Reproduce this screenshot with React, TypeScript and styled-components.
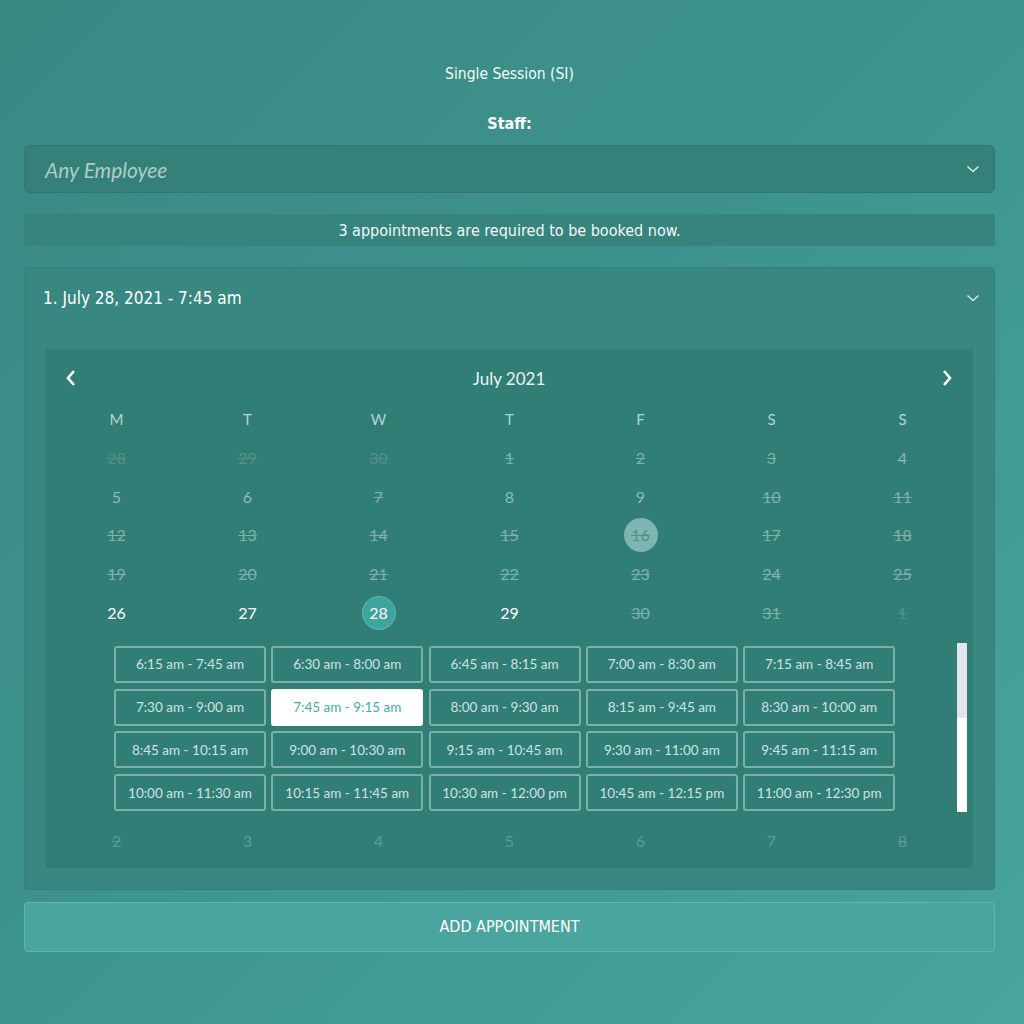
import styled, { createGlobalStyle, css } from 'styled-components';

const GlobalStyle = createGlobalStyle`
  html, body {
    margin: 0;
    padding: 0;
  }
  body {
    min-height: 1024px;
    background: linear-gradient(135deg, #398983 0%, #3d938b 45%, #47a59e 100%);
    color: #ffffff;
    font-family: Lato, 'Noto Sans', sans-serif;
  }
`;

const narrow = `'Liberation Sans Narrow', 'DejaVu Sans Condensed', 'Roboto Condensed', sans-serif`;

const Page = styled.div`
  width: 971px;
  margin-left: 24px;
  padding-top: 63px;
  display: flex;
  flex-direction: column;
`;

const ServiceName = styled.div`
  font-family: ${narrow};
  font-size: 15.5px;
  text-align: center;
  line-height: 22px;
  color: #f4f9f8;
`;

const Label = styled.div`
  font-family: ${narrow};
  font-size: 16px;
  font-weight: 700;
  text-align: center;
  line-height: 24px;
  margin-top: 27px;
  margin-bottom: 9px;
`;

const Select = styled.div`
  height: 48px;
  box-sizing: border-box;
  display: flex;
  align-items: center;
  justify-content: space-between;
  padding: 0 14px 0 20px;
  background: #35817a;
  border: 1px solid #317871;
  border-radius: 6px;
`;

const Placeholder = styled.span`
  font-family: Lato, sans-serif;
  font-style: italic;
  font-size: 21px;
  color: #aecdc9;
`;

const Notice = styled.div`
  margin-top: 21px;
  height: 32px;
  display: flex;
  align-items: center;
  justify-content: center;
  background: #37847d;
  border-radius: 3px;
  font-family: ${narrow};
  font-size: 16px;
  color: #f4f9f8;
`;

const Panel = styled.div`
  margin-top: 21px;
  border: 1px solid #338079;
  border-radius: 4px;
  background: #388881;
  padding: 0 21px 21px;
`;

const PanelHeader = styled.div`
  height: 60px;
  display: flex;
  align-items: center;
  justify-content: space-between;
  margin: 0 -7px 0 -3px;
  font-family: ${narrow};
  font-size: 17px;
  color: #ffffff;
`;

const Calendar = styled.div`
  margin-top: 21px;
  background: #317e77;
  padding: 0 5px 8px;
`;

const Nav = styled.div`
  height: 58px;
  display: flex;
  align-items: center;
  justify-content: space-between;
  padding: 0 14px 0 13px;
`;

const Month = styled.div`
  font-family: Lato, sans-serif;
  font-size: 17px;
  color: #e9f3f2;
`;

const NavButton = styled.button`
  background: none;
  border: 0;
  padding: 0;
  width: 14px;
  height: 20px;
  display: flex;
  align-items: center;
  justify-content: center;
  cursor: pointer;
`;

const WeekRow = styled.div`
  display: grid;
  grid-template-columns: repeat(7, 1fr);
  height: 24px;
  align-items: center;
  margin-bottom: 7px;
`;

const WeekDay = styled.div`
  text-align: center;
  font-size: 15px;
  color: #b2d5d0;
`;

const DayRow = styled.div`
  display: grid;
  grid-template-columns: repeat(7, 1fr);
  height: 38.8px;
  align-items: center;
`;

type DayKind = 'active' | 'plain' | 'struck' | 'other';

const Day = styled.div<{ $kind: DayKind; $selected?: boolean; $today?: boolean }>`
  justify-self: center;
  width: 34px;
  height: 34px;
  box-sizing: border-box;
  border-radius: 50%;
  display: flex;
  align-items: center;
  justify-content: center;
  font-size: 16px;
  ${(p) =>
    p.$kind === 'active' &&
    css`
      color: #ffffff;
    `}
  ${(p) =>
    p.$kind === 'plain' &&
    css`
      color: #8bbab5;
    `}
  ${(p) =>
    p.$kind === 'struck' &&
    css`
      color: #7fb1ac;
      text-decoration: line-through;
    `}
  ${(p) =>
    p.$kind === 'other' &&
    css`
      color: #568f8a;
      text-decoration: line-through;
    `}
  ${(p) =>
    p.$today &&
    css`
      background: #7db6b1;
      color: #4e928c;
    `}
  ${(p) =>
    p.$selected &&
    css`
      background: #3fa59c;
      border: 1px solid #5cbcb3;
      color: #ffffff;
    `}
`;

const FadedDay = styled(Day)`
  color: #5f9a94;
`;

const Slots = styled.div`
  display: flex;
  margin: 11px 0 9px;
  height: 169px;
  padding-left: 63px;
`;

const SlotGrid = styled.div`
  margin-top: 3px;
  display: grid;
  grid-template-columns: repeat(5, 152px);
  grid-auto-rows: 37px;
  gap: 5.7px 5.3px;
  align-content: start;
`;

const Slot = styled.button<{ $selected?: boolean }>`
  box-sizing: border-box;
  border: 2px solid #7bb0ab;
  border-radius: 3px;
  background: transparent;
  font-family: Lato, sans-serif;
  font-size: 13.5px;
  color: #cde3e0;
  padding: 0;
  cursor: pointer;
  ${(p) =>
    p.$selected &&
    css`
      background: #ffffff;
      border-color: #ffffff;
      color: #3fb0a6;
    `}
`;

const ScrollTrack = styled.div`
  margin-left: 62px;
  width: 10px;
  height: 169px;
  background: #ffffff;
  display: flex;
  flex-direction: column;
`;

const ScrollThumb = styled.div`
  height: 75px;
  background: #e4e4ec;
`;

const AddButton = styled.button`
  margin-top: 12px;
  height: 50px;
  border: 1px solid #62b6af;
  border-radius: 4px;
  background: #4ba59f;
  color: #ffffff;
  font-family: ${narrow};
  font-size: 16px;
  cursor: pointer;
`;

const Chevron = () => (
  <svg width="14" height="10" viewBox="0 0 14 10">
    <polyline points="1.5,2.5 7,7.5 12.5,2.5" fill="none" stroke="#d6e8e6" strokeWidth="1.5" />
  </svg>
);

const Arrow = ({ dir }: { dir: 'left' | 'right' }) => (
  <svg width="12" height="18" viewBox="0 0 12 18">
    <polyline
      points={dir === 'left' ? '9,2 3,9 9,16' : '3,2 9,9 3,16'}
      fill="none"
      stroke="#ffffff"
      strokeWidth="2.6"
    />
  </svg>
);

type Cell = { d: number; k: DayKind; today?: boolean; selected?: boolean };

const weeks: Cell[][] = [
  [
    { d: 28, k: 'other' },
    { d: 29, k: 'other' },
    { d: 30, k: 'other' },
    { d: 1, k: 'struck' },
    { d: 2, k: 'struck' },
    { d: 3, k: 'struck' },
    { d: 4, k: 'plain' },
  ],
  [
    { d: 5, k: 'plain' },
    { d: 6, k: 'plain' },
    { d: 7, k: 'struck' },
    { d: 8, k: 'plain' },
    { d: 9, k: 'plain' },
    { d: 10, k: 'struck' },
    { d: 11, k: 'struck' },
  ],
  [
    { d: 12, k: 'struck' },
    { d: 13, k: 'struck' },
    { d: 14, k: 'struck' },
    { d: 15, k: 'struck' },
    { d: 16, k: 'struck', today: true },
    { d: 17, k: 'struck' },
    { d: 18, k: 'struck' },
  ],
  [
    { d: 19, k: 'struck' },
    { d: 20, k: 'struck' },
    { d: 21, k: 'struck' },
    { d: 22, k: 'struck' },
    { d: 23, k: 'struck' },
    { d: 24, k: 'struck' },
    { d: 25, k: 'struck' },
  ],
  [
    { d: 26, k: 'active' },
    { d: 27, k: 'active' },
    { d: 28, k: 'active', selected: true },
    { d: 29, k: 'active' },
    { d: 30, k: 'struck' },
    { d: 31, k: 'struck' },
    { d: 1, k: 'other' },
  ],
];

const nextWeek: Cell[] = [
  { d: 2, k: 'other' },
  { d: 3, k: 'plain' },
  { d: 4, k: 'plain' },
  { d: 5, k: 'plain' },
  { d: 6, k: 'plain' },
  { d: 7, k: 'plain' },
  { d: 8, k: 'other' },
];

const slots = [
  '6:15 am - 7:45 am',
  '6:30 am - 8:00 am',
  '6:45 am - 8:15 am',
  '7:00 am - 8:30 am',
  '7:15 am - 8:45 am',
  '7:30 am - 9:00 am',
  '7:45 am - 9:15 am',
  '8:00 am - 9:30 am',
  '8:15 am - 9:45 am',
  '8:30 am - 10:00 am',
  '8:45 am - 10:15 am',
  '9:00 am - 10:30 am',
  '9:15 am - 10:45 am',
  '9:30 am - 11:00 am',
  '9:45 am - 11:15 am',
  '10:00 am - 11:30 am',
  '10:15 am - 11:45 am',
  '10:30 am - 12:00 pm',
  '10:45 am - 12:15 pm',
  '11:00 am - 12:30 pm',
];

const weekDays = ['M', 'T', 'W', 'T', 'F', 'S', 'S'];

export default function App() {
  return (
    <>
      <GlobalStyle />
      <Page>
        <ServiceName>Single Session (SI)</ServiceName>
        <Label>Staff:</Label>
        <Select>
          <Placeholder>Any Employee</Placeholder>
          <Chevron />
        </Select>
        <Notice>3 appointments are required to be booked now.</Notice>
        <Panel>
          <PanelHeader>
            <span>1. July 28, 2021 - 7:45 am</span>
            <Chevron />
          </PanelHeader>
          <Calendar>
            <Nav>
              <NavButton>
                <Arrow dir="left" />
              </NavButton>
              <Month>July 2021</Month>
              <NavButton>
                <Arrow dir="right" />
              </NavButton>
            </Nav>
            <WeekRow>
              {weekDays.map((w, i) => (
                <WeekDay key={i}>{w}</WeekDay>
              ))}
            </WeekRow>
            {weeks.map((week, wi) => (
              <DayRow key={wi}>
                {week.map((c, i) => (
                  <Day key={i} $kind={c.k} $today={c.today} $selected={c.selected}>
                    {c.d}
                  </Day>
                ))}
              </DayRow>
            ))}
            <Slots>
              <SlotGrid>
                {slots.map((s) => (
                  <Slot key={s} $selected={s === '7:45 am - 9:15 am'}>
                    {s}
                  </Slot>
                ))}
              </SlotGrid>
              <ScrollTrack>
                <ScrollThumb />
              </ScrollTrack>
            </Slots>
            <DayRow>
              {nextWeek.map((c, i) => (
                <FadedDay key={i} $kind={c.k}>
                  {c.d}
                </FadedDay>
              ))}
            </DayRow>
          </Calendar>
        </Panel>
        <AddButton>ADD APPOINTMENT</AddButton>
      </Page>
    </>
  );
}
